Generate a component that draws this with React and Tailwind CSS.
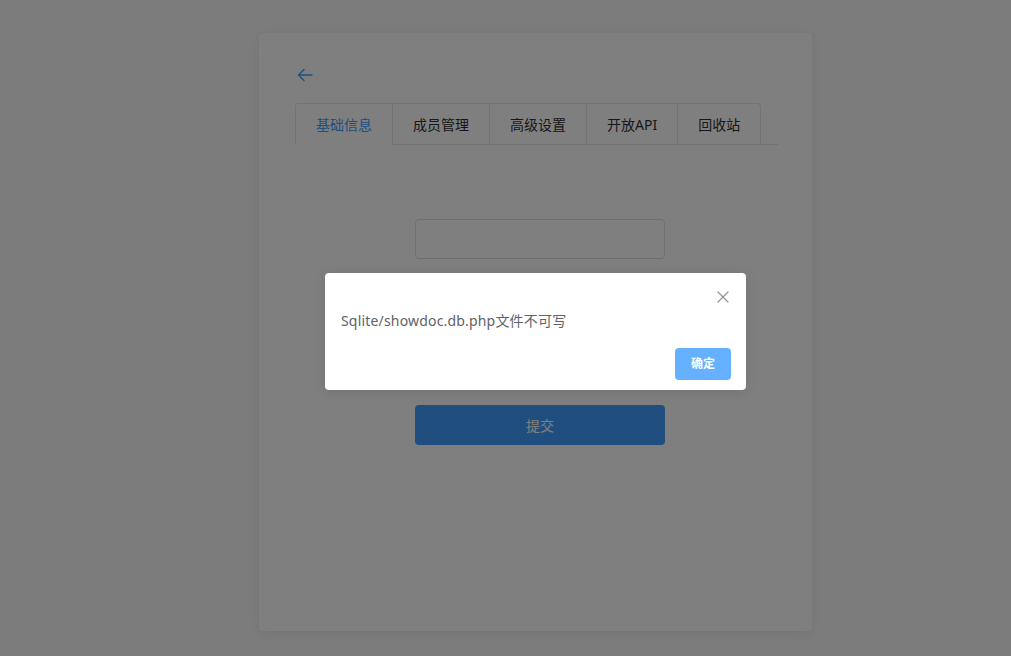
import React from "react";

const font = {
  fontFamily: '"Noto Sans", "Noto Sans CJK SC", sans-serif',
};

function BackArrow() {
  return (
    <svg width="16" height="14" viewBox="0 0 16 14" fill="none" stroke="#409eff" strokeWidth="1.4" strokeLinecap="round" strokeLinejoin="round">
      <path d="M15 7H1.5" />
      <path d="M7 1.5L1.5 7L7 12.5" />
    </svg>
  );
}

const tabs = ["基础信息", "成员管理", "高级设置", "开放API", "回收站"];

function Tabs() {
  return (
    <div className="flex border-b border-[#e4e7ed] w-[483px]">
      <div className="flex border border-b-0 border-[#e4e7ed] rounded-t">
        {tabs.map((t, i) => (
          <div
            key={t}
            className={
              "h-[40px] px-5 flex items-center text-[14px] " +
              (i > 0 ? "border-l border-[#e4e7ed] " : "") +
              (i === 0 ? "text-[#409eff] bg-white -mb-px h-[41px]" : "text-[#303133]")
            }
          >
            {t}
          </div>
        ))}
      </div>
    </div>
  );
}

export default function App() {
  return (
    <div className="relative w-[1011px] h-[656px] bg-[#f7f7f7] overflow-hidden" style={font}>
      <div className="pl-[259px] pt-[33px]">
        <div className="w-[553px] h-[598px] bg-white rounded shadow-[0_2px_12px_rgba(0,0,0,0.06)] pt-[34px] pl-[36px]">
          <div className="h-[16px] pl-[2px] flex items-center">
            <BackArrow />
          </div>
          <div className="mt-[20px]">
            <Tabs />
          </div>
          <div className="flex flex-col items-start pl-[120px] pt-[74px]">
            <div className="w-[250px] h-[40px] border border-[#dcdfe6] rounded bg-white" />
            <div className="mt-[20px] w-[250px] h-[40px] border border-[#dcdfe6] rounded bg-white" />
            <div className="mt-[20px] w-[250px] h-[40px]" />
            <button className="mt-[26px] w-[250px] h-[40px] rounded bg-[#409eff] text-white text-[14px]">
              提交
            </button>
          </div>
        </div>
      </div>

      {/* modal mask */}
      <div className="absolute inset-0 bg-black/50" />

      {/* message box */}
      <div className="absolute left-[325px] top-[273px] w-[421px] h-[117px] bg-white rounded shadow-[0_2px_12px_rgba(0,0,0,0.1)]">
        <button className="absolute right-[17px] top-[18px] w-[12px] h-[12px] flex items-center justify-center">
          <svg width="12" height="12" viewBox="0 0 12 12" stroke="#909399" strokeWidth="1.2" strokeLinecap="round">
            <path d="M1 1L11 11M11 1L1 11" />
          </svg>
        </button>
        <div className="pt-[36px] pl-[16px] text-[14px] text-[#606266] leading-[24px] tracking-[0.18px]">
          Sqlite/showdoc.db.php文件不可写
        </div>
        <button className="absolute right-[15px] top-[75px] w-[56px] h-[32px] rounded bg-[#66b1ff] text-white text-[12px] font-bold">
          确定
        </button>
      </div>
    </div>
  );
}
